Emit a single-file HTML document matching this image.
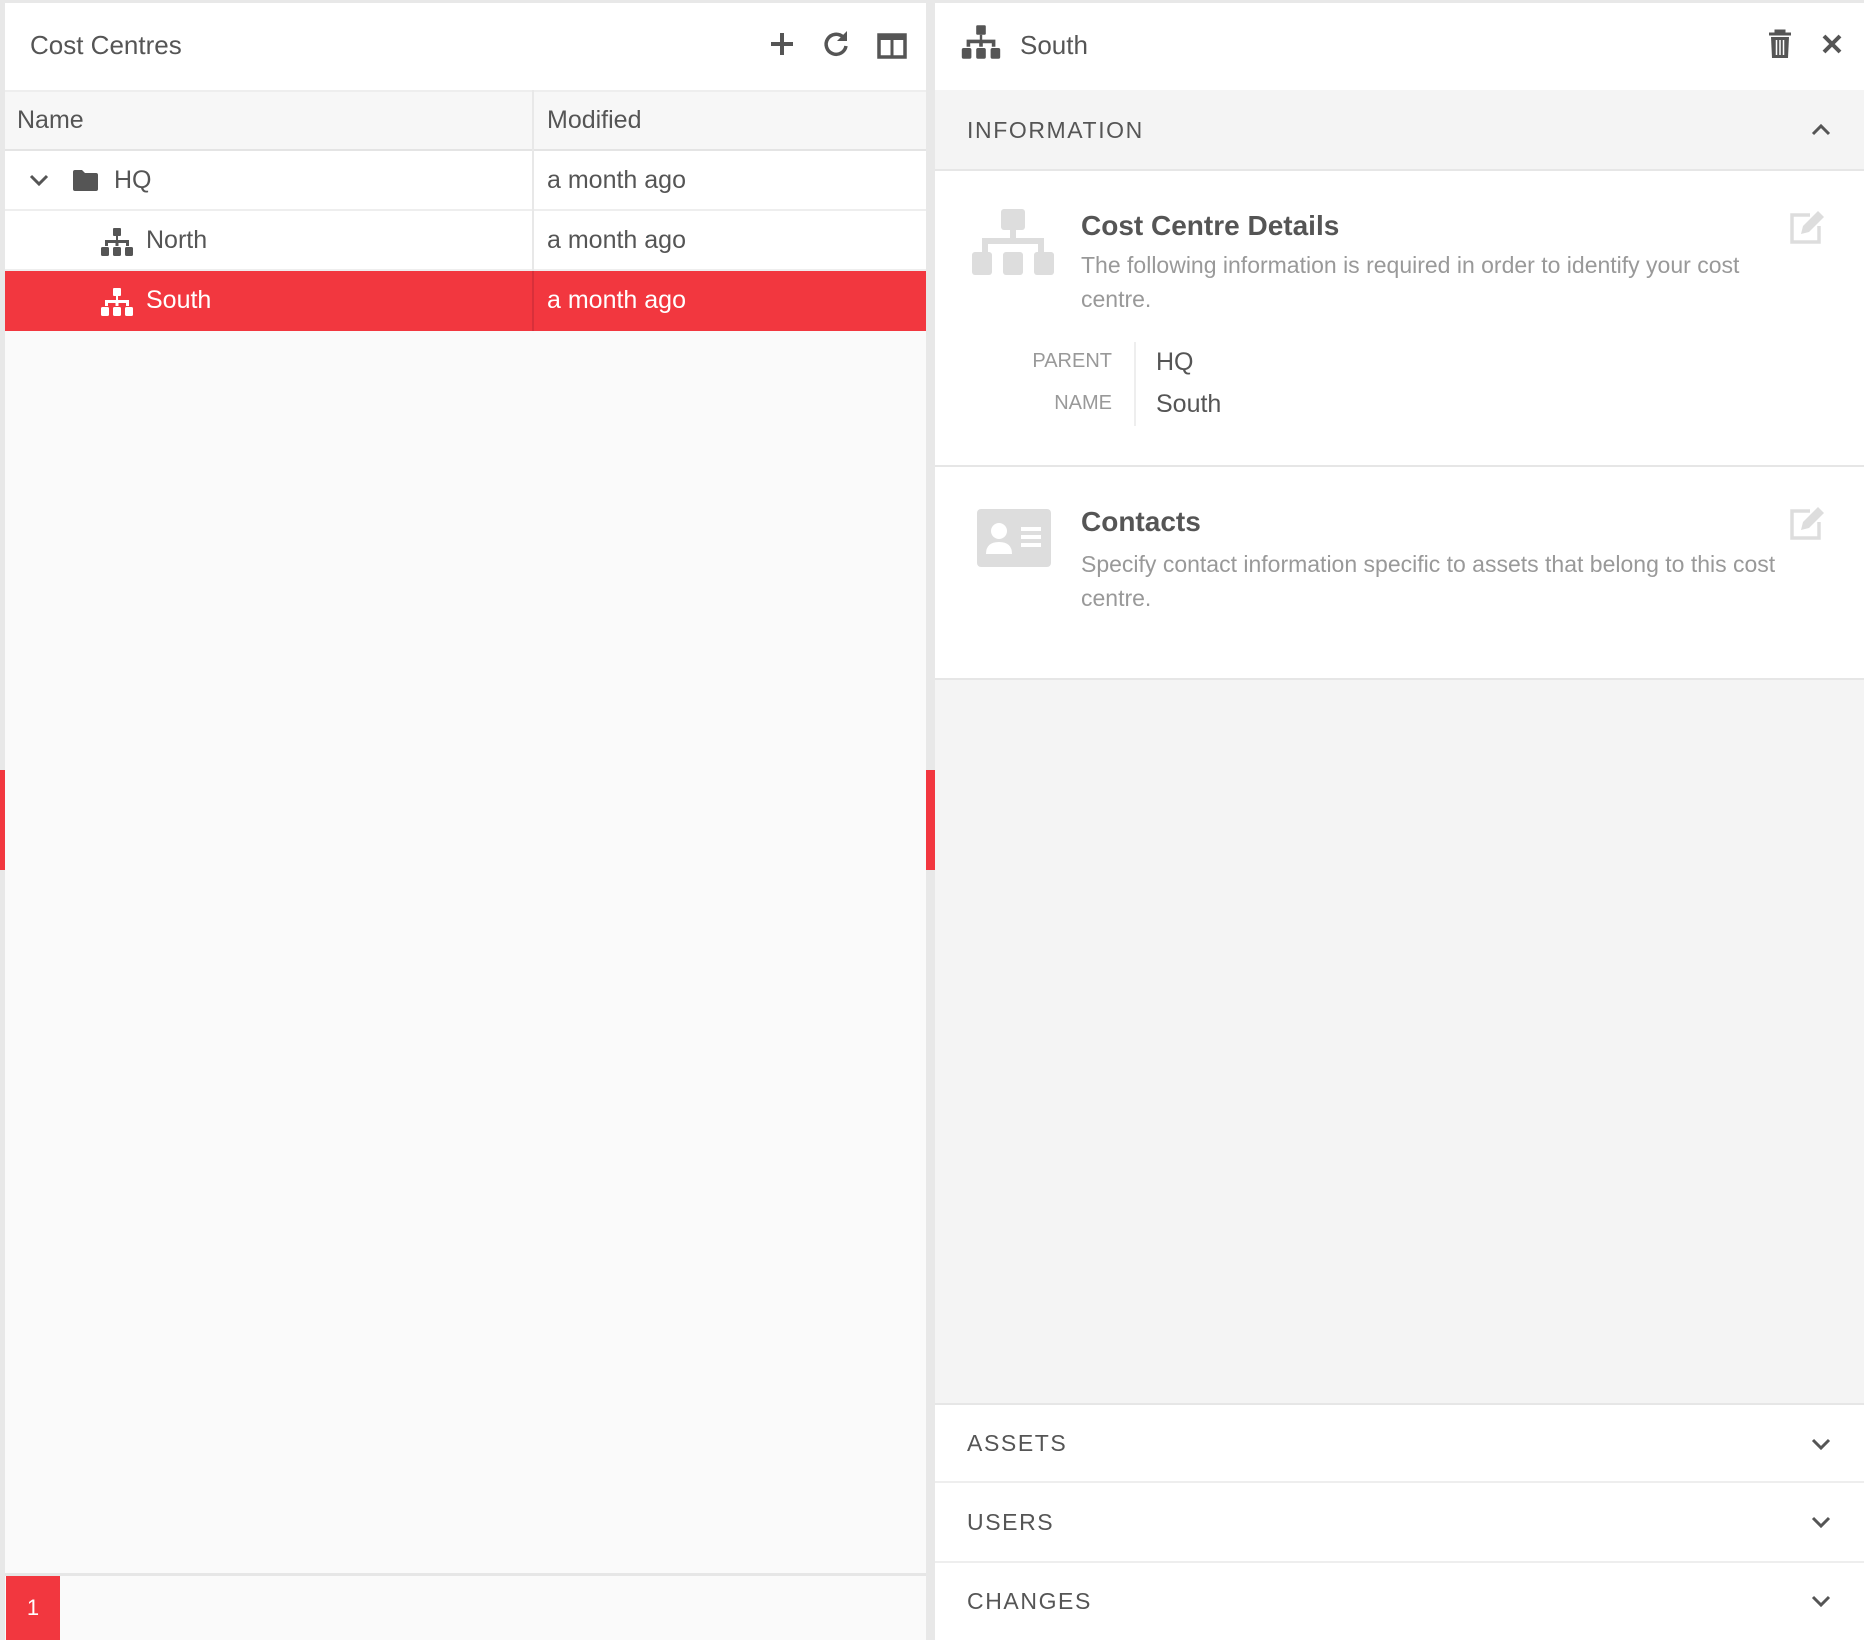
<!DOCTYPE html>
<html><head><meta charset="utf-8"><style>
*{box-sizing:border-box;margin:0;padding:0}
body{width:1864px;height:1640px;position:relative;background:#e8e8e8;font-family:"Liberation Sans",sans-serif;color:#555;overflow:hidden}
.a{position:absolute}
.up{text-transform:uppercase;letter-spacing:1.6px;font-size:23px;color:#555}
</style></head><body>
<div class="a" style="left:5px;top:3px;width:921px;height:1637px;background:#fafafa"></div>
<div class="a" style="left:5px;top:3px;width:921px;height:87px;background:#fff"></div>
<div class="a" style="left:30px;top:30px;font-size:26px;color:#555">Cost Centres</div>
<svg class="a" style="left:768px;top:30px" width="28" height="28" viewBox="0 0 28 28"><path d="M14 3v22M3 14h22" stroke="#555" stroke-width="4"/></svg>
<svg class="a" style="left:822px;top:28px" width="30" height="32" viewBox="0 0 30 32"><path d="M24 18a10 10 0 1 1-3-9" fill="none" stroke="#555" stroke-width="3.5"/><path d="M25 3v10h-10z" fill="#555"/></svg>
<svg class="a" style="left:877px;top:33px" width="30" height="26" viewBox="0 0 30 26"><rect x="2" y="2" width="26" height="22" fill="none" stroke="#555" stroke-width="3.5"/><rect x="2" y="2" width="26" height="5" fill="#555"/><path d="M15 4v20" stroke="#555" stroke-width="3"/></svg>
<div class="a" style="left:5px;top:90px;width:921px;height:61px;background:#f7f7f7;border-top:2px solid #eee;border-bottom:2px solid #e4e4e4"></div>
<div class="a" style="left:17px;top:106px;font-size:25px">Name</div>
<div class="a" style="left:547px;top:106px;font-size:25px">Modified</div>
<div class="a" style="left:5px;top:151px;width:921px;height:60px;background:#fff;border-bottom:2px solid #eee"></div>
<div class="a" style="left:5px;top:211px;width:921px;height:60px;background:#fff;border-bottom:2px solid #eee"></div>
<div class="a" style="left:5px;top:271px;width:921px;height:60px;background:#f2373f"></div>
<div class="a" style="left:532px;top:90px;width:2px;height:241px;background:#e8e8e8"></div>
<div class="a" style="left:532px;top:271px;width:2px;height:60px;background:#d8303a"></div>
<svg class="a" style="left:28px;top:172px" width="22" height="16" viewBox="0 0 22 16"><path d="M3 4l8 8 8-8" fill="none" stroke="#555" stroke-width="3"/></svg>
<svg class="a" style="left:72px;top:169px" width="27" height="22" viewBox="0 0 27 22"><path d="M1 3q0-2 2-2h7l3 3h11q2 0 2 2v14q0 2-2 2H3q-2 0-2-2z" fill="#555"/></svg>
<div class="a" style="left:114px;top:166px;font-size:25px">HQ</div>
<svg class="a" style="left:100px;top:227px" width="34" height="30" viewBox="0 0 34 30"><g fill="#555"><rect x="13" y="1" width="8" height="8" rx="1"/><path d="M16 9h2v5h-2z M5 13h24v3H5z M5 13h3v6H5z M26 13h3v6h-3z M15.5 13h3v6h-3z"/><rect x="1" y="20" width="8" height="9" rx="1.5"/><rect x="13" y="20" width="8" height="9" rx="1.5"/><rect x="25" y="20" width="8" height="9" rx="1.5"/></g></svg>
<div class="a" style="left:146px;top:226px;font-size:25px">North</div>
<svg class="a" style="left:100px;top:287px" width="34" height="30" viewBox="0 0 34 30"><g fill="#fff"><rect x="13" y="1" width="8" height="8" rx="1"/><path d="M16 9h2v5h-2z M5 13h24v3H5z M5 13h3v6H5z M26 13h3v6h-3z M15.5 13h3v6h-3z"/><rect x="1" y="20" width="8" height="9" rx="1.5"/><rect x="13" y="20" width="8" height="9" rx="1.5"/><rect x="25" y="20" width="8" height="9" rx="1.5"/></g></svg>
<div class="a" style="left:146px;top:286px;font-size:25px;color:#fff">South</div>
<div class="a" style="left:547px;top:166px;font-size:25px">a month ago</div>
<div class="a" style="left:547px;top:226px;font-size:25px">a month ago</div>
<div class="a" style="left:547px;top:286px;font-size:25px;color:#fff">a month ago</div>
<div class="a" style="left:5px;top:1573px;width:921px;height:3px;background:#e6e6e6"></div>
<div class="a" style="left:6px;top:1576px;width:54px;height:64px;background:#f2373f;color:#fff;font-size:22px;text-align:center;line-height:64px">1</div>
<div class="a" style="left:0;top:770px;width:5px;height:100px;background:#f2373f"></div>
<div class="a" style="left:926px;top:770px;width:9px;height:100px;background:#f2373f"></div>
<div class="a" style="left:935px;top:3px;width:929px;height:1637px;background:#f4f4f4"></div>
<div class="a" style="left:935px;top:3px;width:929px;height:87px;background:#fff"></div>
<svg class="a" style="left:960px;top:24px" width="42" height="36" viewBox="0 0 34 30"><g fill="#555"><rect x="13" y="1" width="8" height="8" rx="1"/><path d="M16 9h2v5h-2z M5 13h24v3H5z M5 13h3v6H5z M26 13h3v6h-3z M15.5 13h3v6h-3z"/><rect x="1" y="20" width="8" height="9" rx="1.5"/><rect x="13" y="20" width="8" height="9" rx="1.5"/><rect x="25" y="20" width="8" height="9" rx="1.5"/></g></svg>
<div class="a" style="left:1020px;top:30px;font-size:26px">South</div>
<svg class="a" style="left:1767px;top:29px" width="26" height="30" viewBox="0 0 26 30"><path d="M2 5h22M9 5V2h8v3" stroke="#555" stroke-width="3" fill="none"/><path d="M4 8h18l-1 21H5z" fill="#555"/><path d="M9.5 11v15M13 11v15M16.5 11v15" stroke="#fff" stroke-width="1.5"/></svg>
<svg class="a" style="left:1821px;top:33px" width="22" height="22" viewBox="0 0 22 22"><path d="M3 3l16 16M19 3L3 19" stroke="#555" stroke-width="4"/></svg>
<div class="a up" style="left:967px;top:117px">Information</div>
<svg class="a" style="left:1810px;top:122px" width="22" height="16" viewBox="0 0 22 16"><path d="M3 12l8-8 8 8" fill="none" stroke="#555" stroke-width="3"/></svg>
<div class="a" style="left:935px;top:169px;width:929px;height:298px;background:#fff;border-top:2px solid #e6e6e6;border-bottom:2px solid #e6e6e6"></div>
<svg class="a" style="left:972px;top:209px" width="82" height="66" viewBox="0 0 82 66"><g fill="#ddd"><rect x="29" y="0" width="24" height="21" rx="3"/><rect x="38" y="21" width="6" height="13"/><rect x="10" y="29" width="62" height="6"/><rect x="10" y="29" width="6" height="14"/><rect x="66" y="29" width="6" height="14"/><rect x="0" y="43" width="20" height="23" rx="3"/><rect x="31" y="43" width="20" height="23" rx="3"/><rect x="62" y="43" width="20" height="23" rx="3"/></g></svg>
<div class="a" style="left:1081px;top:210px;font-size:28px;font-weight:bold;color:#555">Cost Centre Details</div>
<div class="a" style="left:1081px;top:248px;width:730px;font-size:23px;line-height:34px;color:#999">The following information is required in order to identify your cost centre.</div>
<svg class="a" style="left:1788px;top:209px" width="38" height="36" viewBox="0 0 38 36"><path d="M22 6H4v27h27V17" fill="none" stroke="#ddd" stroke-width="3.5"/><path d="M13 25l2-8L30 2l6 6-15 15z" fill="#ddd"/></svg>
<div class="a" style="left:1000px;top:350px;width:112px;text-align:right;font-size:20px;color:#999">PARENT</div>
<div class="a" style="left:1000px;top:392px;width:112px;text-align:right;font-size:20px;color:#999">NAME</div>
<div class="a" style="left:1134px;top:342px;width:2px;height:84px;background:#eee"></div>
<div class="a" style="left:1156px;top:348px;font-size:25px">HQ</div>
<div class="a" style="left:1156px;top:390px;font-size:25px">South</div>
<div class="a" style="left:935px;top:467px;width:929px;height:213px;background:#fff;border-bottom:2px solid #e6e6e6"></div>
<svg class="a" style="left:977px;top:509px" width="74" height="58" viewBox="0 0 74 58"><rect width="74" height="58" rx="4" fill="#ddd"/><circle cx="22" cy="22" r="8" fill="#fff"/><path d="M9 45q0-12 13-12t13 12z" fill="#fff"/><path d="M44 20h20M44 28h20M44 36h20" stroke="#fff" stroke-width="4"/></svg>
<div class="a" style="left:1081px;top:506px;font-size:28px;font-weight:bold;color:#555">Contacts</div>
<div class="a" style="left:1081px;top:547px;width:740px;font-size:23px;line-height:34px;color:#999">Specify contact information specific to assets that belong to this cost centre.</div>
<svg class="a" style="left:1788px;top:505px" width="38" height="36" viewBox="0 0 38 36"><path d="M22 6H4v27h27V17" fill="none" stroke="#ddd" stroke-width="3.5"/><path d="M13 25l2-8L30 2l6 6-15 15z" fill="#ddd"/></svg>
<div class="a" style="left:935px;top:1403px;width:929px;height:78px;background:#fff;border-top:2px solid #e6e6e6"></div>
<div class="a" style="left:935px;top:1481px;width:929px;height:80px;background:#fff;border-top:2px solid #eee"></div>
<div class="a" style="left:935px;top:1561px;width:929px;height:79px;background:#fff;border-top:2px solid #eee"></div>
<div class="a up" style="left:967px;top:1430px">Assets</div>
<div class="a up" style="left:967px;top:1509px">Users</div>
<div class="a up" style="left:967px;top:1588px">Changes</div>
<svg class="a" style="left:1810px;top:1436px" width="22" height="16" viewBox="0 0 22 16"><path d="M3 4l8 8 8-8" fill="none" stroke="#555" stroke-width="3"/></svg>
<svg class="a" style="left:1810px;top:1514px" width="22" height="16" viewBox="0 0 22 16"><path d="M3 4l8 8 8-8" fill="none" stroke="#555" stroke-width="3"/></svg>
<svg class="a" style="left:1810px;top:1593px" width="22" height="16" viewBox="0 0 22 16"><path d="M3 4l8 8 8-8" fill="none" stroke="#555" stroke-width="3"/></svg>
</body></html>
